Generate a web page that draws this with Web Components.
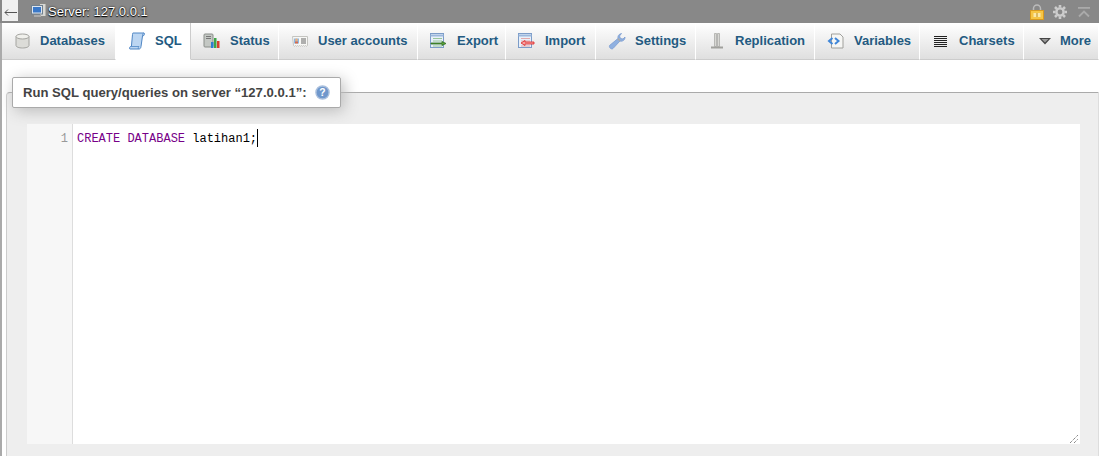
<!DOCTYPE html>
<html>
<head>
<meta charset="utf-8">
<title>Server: 127.0.0.1</title>
<style>
    html, body {
        margin: 0;
        height: 456px;
        overflow: hidden;
        background: linear-gradient(90deg, #aaa 2px, #fff 2px);
        font-family: "Liberation Sans", Arial, sans-serif;
    }
</style>
</head>
<body>
<pma-topbar>Server: 127.0.0.1</pma-topbar>
<pma-tabs>
    <pma-tab icon="db" style="width:114px">Databases</pma-tab>
    <pma-tab icon="sql" style="width:75px" active>SQL</pma-tab>
    <pma-tab icon="status" style="width:88px">Status</pma-tab>
    <pma-tab icon="users" style="width:139px">User accounts</pma-tab>
    <pma-tab icon="export" style="width:88px">Export</pma-tab>
    <pma-tab icon="import" style="width:90px">Import</pma-tab>
    <pma-tab icon="settings" style="width:100px">Settings</pma-tab>
    <pma-tab icon="replication" style="width:119px">Replication</pma-tab>
    <pma-tab icon="variables" style="width:105px">Variables</pma-tab>
    <pma-tab icon="charsets" style="width:104px">Charsets</pma-tab>
    <pma-tab icon="more" style="width:75px">More</pma-tab>
</pma-tabs>
<pma-fieldset legend="Run SQL query/queries on server “127.0.0.1”:">
    <pma-editor></pma-editor>
</pma-fieldset>

<script>
const icons = {
    db: `<svg width="15" height="16" viewBox="0 0 15 16"><path d="M1 3.500v9c0 1.400 2.900 2.500 6.500 2.500s6.500-1.100 6.500-2.500v-9z" fill="#dcdcd8" stroke="#a4a4a0"/><ellipse cx="7.500" cy="3.500" rx="6.500" ry="2.500" fill="#f0f0ec" stroke="#a4a4a0"/></svg>`,
    sql: `<svg width="16" height="18" viewBox="0 0 16 18"><path d="M4 1h11c.6 0 .6 1.600-.2 2.500l-1.300.5-1.500 10.500c-.2 1.500-.8 2.500-2 2.500H1c-.8 0-.6-1.600.4-2.500h1L3.500 2.500C3.600 1.500 3.600 1 4 1z" fill="#bcd6f2" stroke="#4f86c4"/><path d="M2.400 14.500h7.600c-.5.500-.8 1.200-.9 2.500M13.500 4c.3-1.200 0-2.500 1-3" fill="none" stroke="#4f86c4" stroke-width=".8"/></svg>`,
    status: `<svg width="18" height="16" viewBox="0 0 18 16"><rect x="1" y="1" width="9" height="13" rx="1" fill="#c4c8c4" stroke="#8a8e8a"/><rect x="3" y="3" width="5" height="1" fill="#777"/><rect x="3" y="5" width="5" height="1" fill="#777"/><rect x="8" y="9" width="2.500" height="6" fill="#2f7fd0"/><rect x="11" y="5" width="2.500" height="10" fill="#3fa648"/><rect x="14" y="8" width="2.500" height="7" fill="#d8402f"/></svg>`,
    users: `<svg width="16" height="13" viewBox="0 0 16 13"><path d="M.5 1.500h15v9l-1 .8-1-.8-1 .8-1-.8-1 .8-1-.8-1 .8-1-.8-1 .8-1-.8-1 .8-1-.8-1 .8-1-.8z" fill="#f8f8f6" stroke="#c4c4c0"/><rect x="2" y="3.500" width="5" height="5" fill="#8ab8e4"/><circle cx="4.500" cy="5" r="1.400" fill="#e8b080"/><rect x="3" y="6.500" width="3" height="2" fill="#d86a4a"/><path d="M9 4h5M9 6h5M9 8h5" stroke="#666"/></svg>`,
    export: `<svg width="17" height="16" viewBox="0 0 17 16"><rect x=".5" y=".5" width="13" height="14" fill="#e8f0fa" stroke="#7c9cc8"/><path d="M.5 2.500h13" stroke="#9cb8dc" stroke-width="2"/><path d="M3 5.500h9M3 8h9M3 13h9" stroke="#8fc08f" stroke-width=".9"/><path d="M1 10h11V8.500l4 2-4 2V11H1z" fill="#5ba03a" stroke="#2f7020" stroke-width=".8"/></svg>`,
    import: `<svg width="17" height="16" viewBox="0 0 17 16"><rect x=".5" y=".5" width="13" height="14" fill="#e8f0fa" stroke="#7c9cc8"/><path d="M.5 2.500h13" stroke="#9cb8dc" stroke-width="2"/><path d="M3 5.500h9M3 8h9M3 13h9" stroke="#e0a0a0" stroke-width=".9"/><path d="M16 9H7V7.500L3 10l4 2.500V11h9z" fill="#f4a0a0" stroke="#e02020" stroke-width=".8"/></svg>`,
    settings: `<svg width="18" height="17" viewBox="0 0 18 17"><path d="M1.500 12.500 10 5.500c-.5-2 .5-4.500 3.500-5L11.500 3l1 2.500 2.500.5 2-2c.2 2.800-2.200 4.800-5 4l-7 7.500c-1.500 1.300-4.200-1-3.500-2.500z" fill="#8fb0e0" stroke="#7a9cd0" stroke-width=".8"/><path d="M10 5.500l2 2.500" stroke="#aaa" stroke-width="1.500"/></svg>`,
    replication: `<svg width="12" height="16" viewBox="0 0 12 16"><path d="M3.500.5h2v13h-2zM6.500.5h2v13h-2z" fill="#d8d8d4" stroke="#a4a4a0" stroke-width=".7"/><path d="M0 14.500h12" stroke="#a0a09c" stroke-width="2"/></svg>`,
    variables: `<svg width="18" height="16" viewBox="0 0 18 16"><path d="M4.500 1H13l3 3v11H4.500z" fill="#f6f6f4" stroke="#a0a09c"/><path d="M5.500 5 2 8l3.500 3" fill="none" stroke="#3f86d8" stroke-width="2"/><path d="M8 5l3.500 3L8 11" fill="none" stroke="#3f86d8" stroke-width="2"/></svg>`,
    charsets: `<svg width="13" height="11" viewBox="0 0 13 11"><path d="M0 .5h13M0 2.500h13M0 4.500h13M0 6.500h13M0 8.500h13M0 10.500h13" stroke="#222"/></svg>`,
    more: `<svg width="12" height="7" viewBox="0 0 12 7"><path d="M0 0h12L6 6.500z" fill="#444"/><path d="M2.500 1h7L6 4.600z" fill="#999"/></svg>`
};

const tabTemplate = document.createElement('template');
tabTemplate.innerHTML = `
<style>
    :host {
        display: flex;
        flex: none;
        align-items: center;
        box-sizing: border-box;
        height: 37px;
        padding: 0 0 2px 11px;
        border-right: 1px solid #fff;
        border-bottom: 1px solid #ccc;
        background: linear-gradient(#fff, #dfdfdf);
        color: #235a81;
        font-weight: bold;
        font-size: 13px;
        white-space: nowrap;
    }
    :host([active]) {
        background: #fff;
        border-bottom-color: #fff;
        border-right: 1px solid #ccc;
    }
    .icon {
        display: flex;
        justify-content: center;
        align-items: center;
        width: 19px;
        margin: 2px 9px 0 0;
    }
    :host([icon=db]) .icon { margin-right: 8px; }
    :host([icon=more]) .icon { margin-right: 6px; }
</style>
<span class="icon"></span><slot></slot>
`;

customElements.define('pma-tab', class TabElement extends HTMLElement {
    constructor() {
        super();
        const root = this.attachShadow({ mode: 'open' });
        root.appendChild(tabTemplate.content.cloneNode(true));
    }

    connectedCallback() {
        this.shadowRoot.querySelector('.icon').innerHTML = icons[this.getAttribute('icon')] || '';
    }
});

const tabsTemplate = document.createElement('template');
tabsTemplate.innerHTML = `
<style>
    :host {
        display: flex;
        margin-left: 2px;
        background: #fff;
    }
</style>
<slot></slot>
`;

customElements.define('pma-tabs', class TabsElement extends HTMLElement {
    constructor() {
        super();
        this.attachShadow({ mode: 'open' }).appendChild(tabsTemplate.content.cloneNode(true));
    }
});

const topbarTemplate = document.createElement('template');
topbarTemplate.innerHTML = `
<style>
    :host {
        display: flex;
        align-items: flex-start;
        height: 23px;
        background: #888;
        color: #fff;
        font-size: 13px;
    }
    .back {
        display: flex;
        align-items: center;
        justify-content: center;
        box-sizing: border-box;
        width: 16px;
        height: 21px;
        padding-top: 3px;
        margin-left: 2px;
        background: #f0f0f0;
    }
    .server {
        display: flex;
        margin: 3px 0 0 13px;
        line-height: 17px;
        text-shadow: 0 0 2px #000, 0 1px 1px #000;
    }
    .server svg { margin-right: 1px; }
    .tools {
        display: flex;
        align-items: center;
        margin: 4px 9px 0 auto;
    }
    .tools .gear { margin: 0 10px 0 8px; }
</style>
<div class="back">
    <svg width="13" height="7" viewBox="0 0 13 7"><path d="M1 3.500h12M4 .5 1 3.500l3 3" fill="none" stroke="#555"/></svg>
</div>
<div class="server">
    <svg width="16" height="15" viewBox="0 0 16 15"><rect x="8.500" y=".5" width="6.500" height="13" fill="#d8d8d4" stroke="#8a8a86"/><rect x=".5" y="2.500" width="11" height="8.500" fill="#dfe6ee" stroke="#70808e"/><rect x="2" y="4" width="8" height="5.500" fill="#3a78c8"/><path d="M3 13h7" stroke="#aaa" stroke-width="2"/></svg>
    <slot></slot>
</div>
<div class="tools">
    <svg width="14" height="16" viewBox="0 0 14 16"><path d="M3.500 7V4.500a3.500 3.500 0 0 1 7 0V7" fill="none" stroke="#bbb" stroke-width="1.500"/><rect x=".5" y="6.500" width="13" height="9" fill="#f6c544" stroke="#d89a20"/><rect x="3.500" y="9" width="7" height="4" fill="#fbe8a8"/><path d="M7 9v4" stroke="#b88a20"/></svg>
    <svg class="gear" width="16" height="16" viewBox="0 0 16 16"><path d="M8 1v2.500M8 12.500V15M1 8h2.500M12.500 8H15M3 3l1.800 1.800M11.200 11.200 13 13M13 3l-1.800 1.800M4.800 11.200 3 13" stroke="#ccc" stroke-width="2.600"/><circle cx="8" cy="8" r="3.600" fill="none" stroke="#ccc" stroke-width="2.400"/></svg>
    <svg width="12" height="11" viewBox="0 0 12 11"><path d="M0 .75h12M1 9.500 6 4.500l5 5" fill="none" stroke="#aaa" stroke-width="1.800"/></svg>
</div>
`;

customElements.define('pma-topbar', class TopbarElement extends HTMLElement {
    constructor() {
        super();
        this.attachShadow({ mode: 'open' }).appendChild(topbarTemplate.content.cloneNode(true));
    }
});

const fieldsetTemplate = document.createElement('template');
fieldsetTemplate.innerHTML = `
<style>
    :host {
        display: block;
        box-sizing: border-box;
        height: 364px;
        margin: 32px 0 0 6px;
        background: #eee;
        border-style: solid;
        border-width: 1px 1px 0 1px;
        border-color: #aaa #ddd #ddd #ccc;
        border-top-left-radius: 4px;
        color: #444;
    }
    .legend {
        display: flex;
        align-items: center;
        width: fit-content;
        box-sizing: border-box;
        height: 31px;
        margin: -16px 0 16px 5px;
        padding: 0 10px;
        background: #fff;
        border: 1px solid #aaa;
        border-radius: 2px;
        box-shadow: 3px 3px 15px #bbb;
        font-weight: bold;
        font-size: 13.100px;
    }
    .help { margin-left: 8px; display: flex; }
    .body { padding: 0 18px 0 20px; }
</style>
<div class="legend"><span></span>
    <span class="help"><svg width="15" height="15" viewBox="0 0 16 16"><circle cx="8" cy="8" r="7" fill="#6f97cc" stroke="#a9bfdd" stroke-width="1.500"/><text x="8" y="12" text-anchor="middle" font-family="Liberation Sans, sans-serif" font-size="11" font-weight="bold" fill="#fff">?</text></svg></span>
</div>
<div class="body"><slot></slot></div>
`;

customElements.define('pma-fieldset', class FieldsetElement extends HTMLElement {
    static get observedAttributes() { return ['legend']; }

    constructor() {
        super();
        this.attachShadow({ mode: 'open' }).appendChild(fieldsetTemplate.content.cloneNode(true));
    }

    attributeChangedCallback(attr, oldValue, newValue) {
        switch (attr) {
            case "legend": this.shadowRoot.querySelector('.legend span').textContent = newValue;
                break;
        }
    }
});

const editorTemplate = document.createElement('template');
editorTemplate.innerHTML = `
<style>
    :host {
        display: flex;
        position: relative;
        height: 320px;
        background: #fff;
        font-family: "Liberation Mono", "DejaVu Sans Mono", monospace;
        font-size: 12px;
        line-height: 16px;
    }
    .gutter {
        box-sizing: border-box;
        width: 46px;
        padding: 7px 4px 0 0;
        background: #f7f7f7;
        border-right: 1px solid #ddd;
        text-align: right;
        color: #999;
    }
    .code {
        padding: 7px 0 0 4px;
        color: #000;
        white-space: pre;
    }
    .kw { color: #770088; }
    .cursor {
        display: inline-block;
        width: 1px;
        height: 18px;
        margin-top: -2px;
        background: #000;
        vertical-align: top;
    }
    svg { position: absolute; right: 0; bottom: 0; }
</style>
<div class="gutter">1</div>
<div class="code"><span class="kw">CREATE</span> <span class="kw">DATABASE</span> latihan1;<span class="cursor"></span></div>
<svg width="11" height="10" viewBox="0 0 11 10"><path d="M1 9 9 1M5 9 9 5" stroke="#555" stroke-dasharray="1 1" fill="none"/></svg>
`;

customElements.define('pma-editor', class EditorElement extends HTMLElement {
    constructor() {
        super();
        this.attachShadow({ mode: 'open' }).appendChild(editorTemplate.content.cloneNode(true));
    }
});
</script>
</body>
</html>
